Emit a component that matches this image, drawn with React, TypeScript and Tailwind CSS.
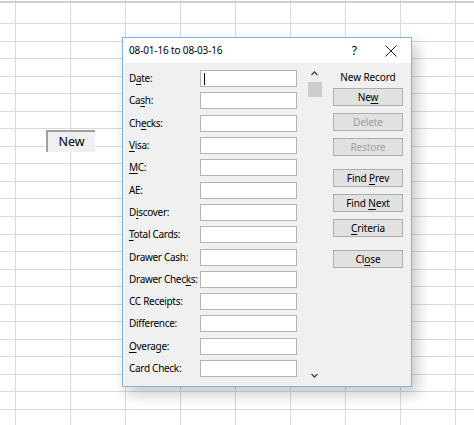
import React from 'react';

const COLS = [16, 55, 55, 55, 55, 55, 55, 55, 55, 55];
const ROWS = 23;

// label text with one underlined accelerator letter
const Acc: React.FC<{ text: string; at?: number }> = ({ text, at }) => {
    if (at === undefined) return <span className="whitespace-pre">{text}</span>;
    return (
        <span className="whitespace-pre">
            {text.slice(0, at)}
            <span className="underline underline-offset-2">{text[at]}</span>
            {text.slice(at + 1)}
        </span>
    );
};

const fields: { label: string; at?: number }[] = [
    { label: 'Date:', at: 1 },
    { label: 'Cash:', at: 2 },
    { label: 'Checks:', at: 2 },
    { label: 'Visa:', at: 0 },
    { label: 'MC:', at: 0 },
    { label: 'AE:' },
    { label: 'Discover:', at: 1 },
    { label: 'Total Cards:', at: 0 },
    { label: 'Drawer Cash:' },
    { label: 'Drawer Checks:', at: 11 },
    { label: 'CC Receipts:' },
    { label: 'Difference:' },
    { label: 'Overage:', at: 0 },
    { label: 'Card Check:' },
];

const DlgButton: React.FC<{ text: string; at?: number; disabled?: boolean; className?: string }> = ({ text, at, disabled, className }) => (
    <button
        className={`w-[70px] h-[18px] border border-[#adadad] bg-[#e1e1e1] flex items-center justify-center text-[10px] tracking-[-0.1px] leading-none ${disabled ? 'text-[#a0a0a0]' : 'text-black'} ${className ?? ''}`}
    >
        <Acc text={text} at={at} />
    </button>
);

const Sheet: React.FC = () => (
    <div className="flex flex-col">
        <div className="flex h-[3px] border-b-2 border-[#d0d0d0]">
            {COLS.map((w, i) => (
                <div key={i} style={{ width: w }} className="shrink-0 border-r border-[#dadada]" />
            ))}
        </div>
        <div className="flex h-[21px] border-b border-[#dadada]">
            {COLS.map((w, i) => (
                <div key={i} style={{ width: w }} className="shrink-0 border-r border-[#dadada]" />
            ))}
        </div>
        {Array.from({ length: ROWS }).map((_, r) => (
            <div key={r} className="flex h-[17.55px] border-b border-[#dadada]">
                {COLS.map((w, i) => (
                    <div key={i} style={{ width: w }} className="shrink-0 border-r border-[#dadada]" />
                ))}
            </div>
        ))}
    </div>
);

const App: React.FC = () => {
    return (
        <div className="relative w-[474px] h-[425px] overflow-hidden bg-white" style={{ fontFamily: '"Noto Sans", "Open Sans", sans-serif' }}>
            <Sheet />

            {/* form button placed on the sheet */}
            <button className="absolute left-[46px] top-[130px] w-[49px] h-[22px] bg-[#f0f0f0] border-t-2 border-l-2 border-[#a0a0a0] flex items-center justify-center text-[12.5px] text-black">
                New
            </button>

            {/* data form dialog */}
            <div className="absolute left-[122px] top-[37px] w-[290px] h-[350px] border border-[#83b3e0] bg-[#f0f0f0] shadow-[5px_7px_14px_rgba(0,0,0,0.22)] flex flex-col">
                <div className="h-[25px] bg-white flex items-center pl-[6px] pr-[14px] shrink-0">
                    <span className="text-[10px] tracking-[-0.15px] text-black">08-01-16 to 08-03-16</span>
                    <span className="ml-auto text-[12px] text-black mr-[28px]">?</span>
                    <svg width="12" height="12" viewBox="0 0 12 12" className="shrink-0">
                        <path d="M0.5 0.5 L11.5 11.5 M11.5 0.5 L0.5 11.5" stroke="#222" strokeWidth="1" fill="none" />
                    </svg>
                </div>

                <div className="flex flex-1">
                    {/* fields */}
                    <div className="flex flex-col pt-[4.5px] pl-[6px] w-[175px]">
                        {fields.map((f, i) => (
                            <div key={i} className="h-[22.3px] flex items-center shrink-0">
                                <span className="w-[71px] shrink-0 text-[10px] tracking-[-0.3px] text-black whitespace-nowrap">
                                    <Acc text={f.label} at={f.at} />
                                </span>
                                <div className="w-[97px] h-[17px] shrink-0 bg-white border border-[#b4b4b4] flex items-center pl-[3px]">
                                    {i === 0 && <div className="w-px h-[12px] bg-black" />}
                                </div>
                            </div>
                        ))}
                    </div>

                    {/* scrollbar */}
                    <div className="ml-[9px] w-[15px] flex flex-col items-center pt-[6px] pb-[4px] mb-[2px]">
                        <svg width="9" height="9" viewBox="0 0 9 9" className="shrink-0">
                            <path d="M1.5 6 L4.5 3 L7.5 6" stroke="#444" strokeWidth="1.3" fill="none" />
                        </svg>
                        <div className="w-[14px] h-[15px] bg-[#cdcdcd] mt-[4px]" />
                        <div className="flex-1" />
                        <svg width="9" height="9" viewBox="0 0 9 9" className="shrink-0">
                            <path d="M1.5 3 L4.5 6 L7.5 3" stroke="#444" strokeWidth="1.3" fill="none" />
                        </svg>
                    </div>

                    {/* command buttons */}
                    <div className="ml-[11px] flex flex-col items-center pt-[7px]">
                        <span className="text-[10px] tracking-[-0.1px] text-black h-[14px] leading-[14px] mb-[4px]">New Record</span>
                        <DlgButton text="New" at={2} />
                        <DlgButton text="Delete" disabled className="mt-[7px]" />
                        <DlgButton text="Restore" disabled className="mt-[7px]" />
                        <DlgButton text="Find Prev" at={5} className="mt-[13px]" />
                        <DlgButton text="Find Next" at={5} className="mt-[7px]" />
                        <DlgButton text="Criteria" at={0} className="mt-[7px]" />
                        <DlgButton text="Close" at={2} className="mt-[13px]" />
                    </div>
                </div>
            </div>
        </div>
    );
};

export default App;
